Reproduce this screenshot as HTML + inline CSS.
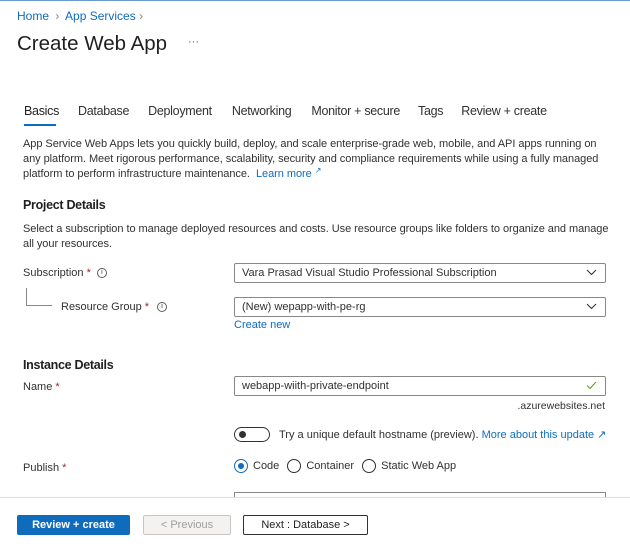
<!DOCTYPE html>
<html><head><meta charset="utf-8"><style>
*{margin:0;padding:0;box-sizing:border-box}
body{width:630px;height:549px;background:#fff;font-family:"Liberation Sans",sans-serif;color:#323130;position:relative;overflow:hidden;font-size:11px}
.a{position:absolute;white-space:nowrap}
.blue{color:#0f6cbd}
.star{color:#a4262c}
.dd{position:absolute;left:234px;width:372px;height:20px;border:1px solid #8a8886;border-radius:2px;padding:3px 7px;font-size:11px}
.chev{position:absolute;right:8px;top:5px}
.info{display:inline-block;width:10px;height:10px;border:1px solid #605e5c;border-radius:50%;font-size:7px;text-align:center;line-height:8px;margin-left:6px;vertical-align:middle}
.radio{display:inline-block;width:14px;height:14px;border:1px solid #323130;border-radius:50%;vertical-align:middle;margin-right:5px;position:relative}
.btn{position:absolute;top:515px;height:20px;font-size:11px;text-align:center;border-radius:2px}
</style></head><body>
<div class="a" style="left:0;top:0;width:630px;height:1px;background:#6a9bd0"></div>
<div class="a blue" style="left:17px;top:9px;font-size:12px">Home <span style="color:#8a8886;margin:0 3px">›</span> App Services <span style="color:#8a8886">›</span></div>
<div class="a" style="left:17px;top:32px;font-size:20.5px;color:#201f1e">Create Web App</div>
<div class="a" style="left:188px;top:36px;font-size:11px;color:#605e5c">···</div>
<div class="a" style="left:24px;top:104px;font-size:12.5px;letter-spacing:-0.3px">
<span style="color:#201f1e">Basics</span><span style="margin-left:19px">Database</span><span style="margin-left:19px">Deployment</span><span style="margin-left:20px">Networking</span><span style="margin-left:20px">Monitor + secure</span><span style="margin-left:18px">Tags</span><span style="margin-left:18px">Review + create</span></div>
<div class="a" style="left:24px;top:124px;width:32px;height:2px;background:#0f6cbd"></div>
<div class="a" style="left:23px;top:137px;line-height:15px;font-size:11px;letter-spacing:-0.05px">App Service Web Apps lets you quickly build, deploy, and scale enterprise-grade web, mobile, and API apps running on<br>any platform. Meet rigorous performance, scalability, security and compliance requirements while using a fully managed<br>platform to perform infrastructure maintenance. &nbsp;<span class="blue">Learn more <span style="font-size:8px;position:relative;top:-4px">↗</span></span></div>
<div class="a" style="left:23px;top:198px;font-size:12.5px;font-weight:bold;color:#201f1e;letter-spacing:-0.3px">Project Details</div>
<div class="a" style="left:23px;top:222px;line-height:15px;font-size:11px;letter-spacing:-0.05px">Select a subscription to manage deployed resources and costs. Use resource groups like folders to organize and manage<br>all your resources.</div>
<div class="a" style="left:23px;top:267px">Subscription <span class="star">*</span><span class="info">i</span></div>
<div class="dd" style="top:263px">Vara Prasad Visual Studio Professional Subscription<svg class="chev" width="11" height="7"><path d="M1 1l4.5 4.5L10 1" stroke="#323130" fill="none"/></svg></div>
<div class="a" style="left:26px;top:288px;width:1px;height:18px;background:#8a8886"></div>
<div class="a" style="left:26px;top:305px;width:26px;height:1px;background:#8a8886"></div>
<div class="a" style="left:61px;top:301px">Resource Group <span class="star">*</span><span class="info" style="margin-left:8px">i</span></div>
<div class="dd" style="top:297px">(New) wepapp-with-pe-rg<svg class="chev" width="11" height="7"><path d="M1 1l4.5 4.5L10 1" stroke="#323130" fill="none"/></svg></div>
<div class="a blue" style="left:234px;top:319px">Create new</div>
<div class="a" style="left:23px;top:358px;font-size:12.5px;font-weight:bold;color:#201f1e;letter-spacing:-0.3px">Instance Details</div>
<div class="a" style="left:23px;top:381px">Name <span class="star">*</span></div>
<div class="dd" style="top:376px">webapp-wiith-private-endpoint<svg class="chev" width="11" height="9" style="top:4px"><path d="M1 4.5l3 3L10 1" stroke="#57a300" fill="none"/></svg></div>
<div class="a" style="right:25px;top:400px;font-size:10.5px">.azurewebsites.net</div>
<div class="a" style="left:234px;top:427px;width:36px;height:15px;border:1px solid #323130;border-radius:8px"><div style="position:absolute;left:4px;top:3px;width:7px;height:7px;border-radius:50%;background:#323130"></div></div>
<div class="a" style="left:279px;top:428px">Try a unique default hostname (preview). <span class="blue">More about this update ↗</span></div>
<div class="a" style="left:23px;top:462px">Publish <span class="star">*</span></div>
<div class="a" style="left:234px;top:459px"><span class="radio" style="border-color:#0f6cbd"><span style="position:absolute;left:3px;top:3px;width:6px;height:6px;border-radius:50%;background:#0f6cbd"></span></span>Code <span class="radio" style="margin-left:5px"></span>Container <span class="radio" style="margin-left:5px"></span>Static Web App</div>
<div class="a" style="left:234px;top:492px;width:372px;height:10px;border:1px solid #8a8886;border-bottom:none"></div>
<div class="a" style="left:0;top:497px;width:630px;height:52px;background:#fff;border-top:1px solid #e1dfdd"></div>
<div class="btn" style="left:17px;width:113px;background:#0f6cbd;color:#fff;font-weight:bold;line-height:20px">Review + create</div>
<div class="btn" style="left:143px;width:88px;background:#f3f2f1;border:1px solid #c8c6c4;color:#a19f9d;line-height:18px">&lt; Previous</div>
<div class="btn" style="left:243px;width:125px;border:1px solid #323130;color:#201f1e;line-height:18px">Next : Database &gt;</div>
</body></html>
